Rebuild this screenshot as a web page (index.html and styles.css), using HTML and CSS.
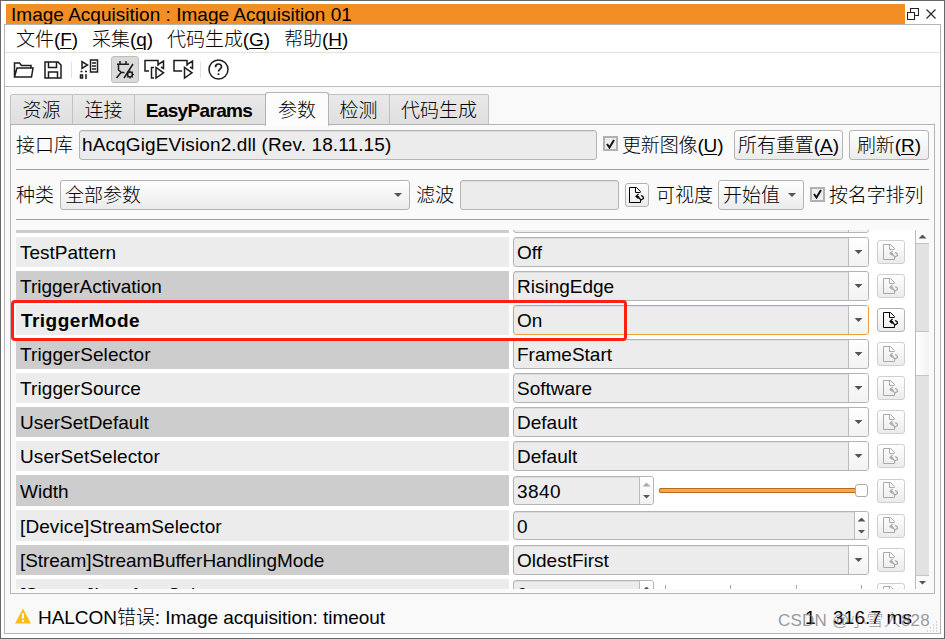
FILE: index.html
```html
<!DOCTYPE html>
<html lang="zh-CN">
<head>
<meta charset="utf-8">
<title>Image Acquisition</title>
<link rel="stylesheet" href="styles.css">
</head>
<body>
<svg class="defs" aria-hidden="true">
  <symbol id="revert" viewBox="0 0 16 17"><path d="M11.5 5.500V4.500L7.500.500H.5v15h11v-2.500M6.500 1v4.500H11" fill="none" stroke="currentColor"/><path d="M7 9.500h2.500l1 2 1.500 1.500 2.500-1.500-.5-2-2-1M9.500 7L7 9.500 9.500 11.500" fill="none" stroke="currentColor" stroke-width="1.200"/></symbol>
</svg>
<div class="window">
  <header class="titlebar"><div class="title">Image Acquisition : Image Acquisition 01</div>
    <div class="controls">
      <svg width="12" height="12" viewBox="0 0 12 12"><path d="M3.500 4V.5h8v7H8M.5 4.500h7v7h-7z"/></svg>
      <svg width="10" height="10" viewBox="0 0 10 10"><path d="M.5.500l9 9M9.500.500l-9 9"/></svg>
    </div>
  </header>
  <div class="frame">
    <nav class="menu"><span>文件(<u>F</u>)</span><span>采集(<u>q</u>)</span><span>代码生成(<u>G</u>)</span><span>帮助(<u>H</u>)</span></nav>
    <div class="toolbar">
      <svg class="open" width="21" height="18" viewBox="0 0 21 18"><path d="M1.500 16V2h5l2 2.500H18V7M1.500 16L4 7h16l-1.500 9z"/></svg>
      <svg class="save" width="18" height="18" viewBox="0 0 18 18"><path d="M1 1h13l3 3v13H1zM4.500 1v5.500h8V1M4.500 17v-6h9v6"/></svg>
      <i class="sep"></i>
      <svg class="grab" width="20" height="21" viewBox="0 0 20 21"><path d="M3 2.500v7l5.500-3.500zM11.500 1h7v12h-7zM13 4h4M13 7h4M13 10h4M1.500 12.500h2M6 12.500h2M1.500 16h2v3h-2zM7 15v5"/></svg>
      <span class="tool-on"><svg width="20" height="20" viewBox="0 0 20 20"><path d="M5 1v3M11 1v3M2 4.200h12M3.500 4.500v5.500L6.500 12.500h3M6 12.500L1.500 18M18 4L9 18"/><circle cx="15" cy="14.500" r="2.400"/><path d="M15 10.500v1.500M15 17v1.500M11 14.500h1.500M17.500 14.500H19M12.200 11.700l1 1M17.800 11.700l-1 1M12.200 17.300l1-1M17.800 17.300l-1-1" stroke-width="1.200"/></svg></span>
      <svg class="snap" width="21" height="21" viewBox="0 0 21 21"><path d="M5 12H1V1.500h13V7M14 5.500L19.500 2v7.500L17 8M10 8.500H7.500v10.500H10M12 8.500v10.500l7.500-5.200z"/></svg>
      <svg class="live" width="21" height="21" viewBox="0 0 21 21"><path d="M9 12H1V1.500h13V7M14 5.500L19.500 2v7.500L17 8M11.500 8.500v10.500l7.500-5.200z"/></svg>
      <i class="sep sep-two"></i>
      <svg class="help" width="21" height="21" viewBox="0 0 21 21"><circle cx="10.500" cy="10.500" r="9.500"/><path d="M7.500 8.200C7.500 4 13.500 4 13.500 7.800c0 2.200-3 2.500-3 4.700M10.500 14.200v1.800" stroke-width="1.700"/></svg>
    </div>
    <main class="content">
      <div class="tabs"><div class="tab">资源</div><div class="tab">连接</div><div class="tab strong easy">EasyParams</div><div class="tab active">参数</div><div class="tab">检测</div><div class="tab">代码生成</div></div>
      <section class="pane">
        <div class="bar">
          <label class="l1">接口库</label><div class="input lib">hAcqGigEVision2.dll (Rev. 18.11.15)</div>
          <span class="check"><svg viewBox="0 0 9 10"><path d="M1 5l2.500 3.500L8 1"/></svg></span><label class="update">更新图像(<u>U</u>)</label>
          <button class="reset">所有重置(<u>A</u>)</button><button class="refresh">刷新(<u>R</u>)</button>
        </div>
        <div class="bar second">
          <label class="l2">种类</label><div class="select kind"><span>全部参数</span><i class="down"></i></div>
          <label class="l3">滤波</label><div class="input filter"></div>
          <button class="rev small"><svg><use href="#revert"/></svg></button>
          <label class="l4">可视度</label><div class="select vis"><span>开始值</span><i class="down"></i></div>
          <span class="check"><svg viewBox="0 0 9 10"><path d="M1 5l2.500 3.500L8 1"/></svg></span><label class="sort">按名字排列</label>
        </div>
        <div class="view">
          <div class="rows">
            <div class="row"><div class="name dark"></div><div class="combo"><span></span><b><i class="down"></i></b></div><button class="rev off"><svg><use href="#revert"/></svg></button></div>
            <div class="row"><div class="name">TestPattern</div><div class="combo"><span>Off</span><b><i class="down"></i></b></div><button class="rev off"><svg><use href="#revert"/></svg></button></div>
            <div class="row"><div class="name dark">TriggerActivation</div><div class="combo"><span>RisingEdge</span><b><i class="down"></i></b></div><button class="rev off"><svg><use href="#revert"/></svg></button></div>
            <div class="row"><div class="name strong">TriggerMode</div><div class="combo focus"><span>On</span><b><i class="down"></i></b></div><button class="rev"><svg><use href="#revert"/></svg></button></div>
            <div class="row"><div class="name dark wide">TriggerSelector</div><div class="combo"><span>FrameStart</span><b><i class="down"></i></b></div><button class="rev off"><svg><use href="#revert"/></svg></button></div>
            <div class="row"><div class="name wide">TriggerSource</div><div class="combo"><span>Software</span><b><i class="down"></i></b></div><button class="rev off"><svg><use href="#revert"/></svg></button></div>
            <div class="row"><div class="name dark">UserSetDefault</div><div class="combo"><span>Default</span><b><i class="down"></i></b></div><button class="rev off"><svg><use href="#revert"/></svg></button></div>
            <div class="row"><div class="name wide">UserSetSelector</div><div class="combo"><span>Default</span><b><i class="down"></i></b></div><button class="rev off"><svg><use href="#revert"/></svg></button></div>
            <div class="row tall"><div class="name dark">Width</div><div class="ranged"><div class="combo spin digits"><span>3840</span><b><i class="up dim"></i><i class="down"></i></b></div><div class="slider"><i class="track"></i><i class="knob"></i></div></div><button class="rev off"><svg><use href="#revert"/></svg></button></div>
            <div class="row tall"><div class="name wide">[Device]StreamSelector</div><div class="combo spin"><span>0</span><b><i class="up"></i><i class="down"></i></b></div><button class="rev off"><svg><use href="#revert"/></svg></button></div>
            <div class="row"><div class="name dark narrow">[Stream]StreamBufferHandlingMode</div><div class="combo"><span>OldestFirst</span><b><i class="down"></i></b></div><button class="rev off"><svg><use href="#revert"/></svg></button></div>
            <div class="row tall last"><div class="name">[System]InterfaceSelector</div><div class="ranged"><div class="combo spin"><span>0</span><b><i class="up"></i><i class="down dim"></i></b></div><div class="ticks"><i></i><i></i><i></i><i></i></div></div><button class="rev off"><svg><use href="#revert"/></svg></button></div>
          </div>
          <div class="scroll"><div class="end"><i class="up"></i></div><div class="gutter"></div><div class="thumb"></div><div class="gutter rest"></div><div class="end"><i class="down"></i></div></div>
        </div>
      </section>
    </main>
    <footer class="status">
      <svg width="16" height="16" viewBox="0 0 16 16"><path d="M8 .5L16 15.500H0z" fill="#fcbd17"/><path d="M8 5v5.500M8 12v2" stroke="#fff" stroke-width="2"/></svg>
      <span class="message">HALCON错误: Image acquisition: timeout</span><span class="count">1</span><span class="time">316.7 ms</span>
    </footer>
  </div>
  <div class="marker"></div>
  <div class="watermark">CSDN @小雪人828</div>
  <svg class="grip" width="11" height="11" viewBox="0 0 11 11"><path d="M9 1h1M6 4h1M9 4h1M3 7h1M6 7h1M9 7h1M0 10h1M3 10h1M6 10h1M9 10h1"/></svg>
</div>
</body>
</html>
```
FILE: styles.css
```css
* { box-sizing: border-box; }
body { margin: 0; font: 19px/22px "Liberation Sans", "Noto Sans CJK SC", sans-serif; color: #000; overflow: hidden; }
.defs { position: absolute; width: 0; height: 0; }
.window { position: relative; display: flex; flex-direction: column; width: 945px; height: 639px; padding: 3px 3px 4px; border: 1px solid #69666b; background: #fff; }
.titlebar { display: flex; flex: none; height: 20px; padding-left: 2px; }
.title { flex: none; width: 899px; padding-left: 5px; line-height: 22px; letter-spacing: .02px; background: #f38e24; white-space: pre; }
.controls { display: flex; align-items: center; gap: 7px; padding-left: 2px; }
.controls svg { fill: none; stroke: #222; stroke-width: 1.1; }
.frame { display: flex; flex: 1; flex-direction: column; min-height: 0; border: 1px solid #b4b4b4; background: #f9f9f9; }
.menu { display: flex; gap: 14px; flex: none; height: 28px; padding: 4px 0 0 11px; letter-spacing: -.05px; border-bottom: 1px solid #e2e2e2; background: #fff; white-space: nowrap; }
.menu, label, .tab, button, .select { font-weight: 300; }
u { text-underline-offset: 2px; text-decoration-thickness: 1px; }
.toolbar { display: flex; align-items: center; flex: none; height: 34px; padding-left: 8px; border-bottom: 1px solid #bdbdbd; background: #fff; }
.toolbar svg { flex: none; fill: none; stroke: #1d1d1d; stroke-width: 1.5; }
.save { margin-left: 10px; }
.sep { width: 1px; height: 16px; margin: 0 7px 0 9px; background: #e0e0e0; }
.tool-on { display: flex; align-items: center; justify-content: center; width: 28px; height: 27px; margin: 0 5px 0 12px; border: 1px solid #bdbdbd; border-radius: 3px; background: #dadada; }
.live { margin-left: 8px; }
.sep-two { margin: 0 7px 0 6px; }
.content { display: flex; flex: none; flex-direction: column; padding: 5px 5px 0; }
.tabs { display: grid; grid-template-columns: 63px 62px 131px 62px 62px 99px; align-items: end; height: 33px; }
.tab { display: flex; align-items: center; justify-content: center; height: 31px; border: 1px solid #c1c1c1; border-left-width: 0; background: linear-gradient(#e9e9e9, #dfdfdf); padding-top: 3px; white-space: nowrap; }
.tab:first-child { border-left-width: 1px; border-radius: 2px 0 0; }
.tab:last-child { border-radius: 0 2px 0 0; }
.strong { font-weight: 700; }
.tab.easy { letter-spacing: -.65px; padding-right: 2px; }
.tab.active { position: relative; z-index: 1; height: 34px; margin: 0 -1px -1px; border: 1px solid #b4b4b4; border-bottom: 0; border-radius: 3px 3px 0 0; background: #fcfcfc; }
.pane { width: 925px; height: 470px; margin-top: -1px; padding: 5px 5px 0; border: 1px solid #b4b4b4; background: #fafafa; }
.bar { display: flex; align-items: center; height: 40px; padding-bottom: 10px; border-bottom: 1px solid #a0a0a0; white-space: nowrap; }
.bar.second { height: 50px; padding-top: 10px; padding-bottom: 9px; }
label { flex: none; padding-top: 2px; }
.l1 { width: 63px; }
.l2 { width: 44px; }
.l3 { width: 50px; padding-left: 6px; }
.l4 { width: 69px; padding-left: 7px; }
.update { width: 112px; letter-spacing: -.15px; }
.sort { width: 96px; letter-spacing: -.15px; }
.input, .select { display: flex; align-items: center; flex: none; height: 30px; border: 1px solid #b4b4b4; border-radius: 3px; background: #ececec; }
.input { padding: 1px 0 0 2px; box-shadow: inset 0 1px #dedede; }
.lib { width: 518px; letter-spacing: .12px; }
.filter { width: 159px; }
.select { justify-content: space-between; padding: 0 7px 0 4px; background: linear-gradient(#fff, #ebebeb); }
.select span { padding-top: 2px; }
.kind { width: 350px; }
.vis { width: 86px; }
.check { display: flex; align-items: center; justify-content: center; flex: none; width: 15px; height: 15px; margin: 0 4px 2px 6px; border: 2px solid #b1b1b1; background: #eee; }
.check svg { flex: none; width: 9px; height: 10px; fill: none; stroke: #111; stroke-width: 2; }
button { flex: none; height: 30px; padding: 2px 0 0; border: 1px solid #b4b4b4; border-radius: 3px; background: linear-gradient(#fff, #ebebeb); color: #000; font-family: inherit; font-size: inherit; line-height: 22px; letter-spacing: -.05px; }
.reset { width: 109px; margin-right: 6px; }
.refresh { width: 80px; }
.rev { display: flex; align-items: center; justify-content: center; width: 28px; height: 24px; margin-left: 8px; padding: 0; }
.rev.small { width: 24px; margin-left: 6px; }
.rev svg { flex: none; width: 16px; height: 17px; }
.rev.off { border-color: #cfcfcf; color: #aaa; }
.up, .down { display: block; flex: none; width: 8px; height: 4px; background: #555; }
.up { clip-path: polygon(50% 0, 100% 100%, 0 100%); }
.down { clip-path: polygon(0 0, 100% 0, 50% 100%); }
.dim { background: #aaa; }
.view { display: flex; justify-content: space-between; width: 913px; height: 359px; margin-top: 10px; overflow: hidden; background: #fff; }
.rows { display: flex; flex: none; flex-direction: column; gap: 4px; margin-top: -27px; }
.row { display: flex; align-items: center; flex: none; height: 30px; }
.row.tall { height: 31px; }
.name { flex: none; width: 493px; height: 100%; margin-right: 4px; padding: 5px 0 0 4px; background: #ececec; }
.name.dark { background: #cdcdcd; }
.name.strong { padding-left: 5px; letter-spacing: .45px; }
.name.wide { letter-spacing: .1px; }
.name.narrow { letter-spacing: -.05px; }
.tall .name { padding-top: 6px; }
.last .name { padding-top: 5px; }
.combo { display: flex; flex: none; width: 356px; height: 30px; overflow: hidden; border: 1px solid #b4b4b4; border-radius: 3px; background: #ececec; box-shadow: inset 0 1px #dedede; }
.combo.focus { border-color: #f39a43; }
.combo span { flex: 1; padding: 4px 0 0 3px; }
.last .combo span { padding-top: 3px; }
.combo b { display: flex; flex-direction: column; align-items: center; justify-content: center; gap: 8px; width: 20px; border-left: 1px solid #bcbcbc; background: linear-gradient(#fff, #f2f2f2); }
.combo.spin { height: 29px; }
.combo.spin b { width: 14px; }
.digits span { letter-spacing: .4px; }
.ranged { display: flex; align-items: center; width: 356px; }
.ranged .combo { width: 141px; }
.slider { display: flex; align-items: center; flex: 1; padding-left: 5px; }
.track { width: 196px; height: 5px; border: 1px solid #b86a1e; border-right: 0; border-radius: 2px 0 0 2px; background: #ffa64d; }
.knob { width: 13px; height: 13px; border: 1px solid #aaa; border-radius: 3px; background: #fff; }
.ticks { display: flex; justify-content: space-between; width: 197px; height: 20px; margin-left: 11px; }
.ticks i { width: 1px; background: #aaa; }
.scroll { display: flex; flex-direction: column; width: 14px; border-left: 1px solid #bcbcbc; }
.end { display: flex; align-items: center; justify-content: center; height: 13px; background: #fafafa; }
.gutter { height: 89px; border: 1px solid #c4c4c4; border-width: 1px 0; background: #e2e2e2; }
.thumb { height: 43px; background: linear-gradient(90deg, #fff, #f2f2f2); }
.rest { flex: 1; }
.status { display: flex; align-items: center; flex: 1; padding: 8px 28px 0 10px; white-space: nowrap; }
.status svg { margin-bottom: 3px; }
.message { flex: 1; margin-left: 7px; font-weight: 300; letter-spacing: -.04px; }
.count { width: 28px; }
.time { letter-spacing: .1px; }
.marker { position: absolute; left: 10px; top: 299px; width: 616px; height: 41px; border: 3px solid #ff2015; border-radius: 4px; }
.watermark { position: absolute; left: 777px; top: 609px; font-size: 17px; font-weight: 300; letter-spacing: .2px; color: rgba(110, 110, 110, .7); white-space: nowrap; }
.grip { position: absolute; left: 926px; top: 620px; stroke: #b0b0b0; }
```
